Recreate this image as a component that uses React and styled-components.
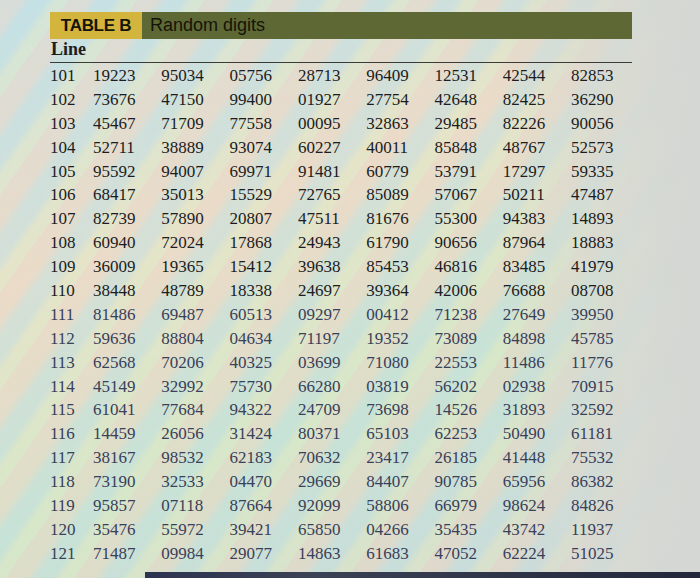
import React from 'react';
import styled, {createGlobalStyle} from 'styled-components';

const GlobalStyle = createGlobalStyle`
html, body {
  margin: 0;
  padding: 0;
}
body {
  background: #d9ddd8;
}
`;

const rows = [
  ['101', '19223', '95034', '05756', '28713', '96409', '12531', '42544', '82853'],
  ['102', '73676', '47150', '99400', '01927', '27754', '42648', '82425', '36290'],
  ['103', '45467', '71709', '77558', '00095', '32863', '29485', '82226', '90056'],
  ['104', '52711', '38889', '93074', '60227', '40011', '85848', '48767', '52573'],
  ['105', '95592', '94007', '69971', '91481', '60779', '53791', '17297', '59335'],
  ['106', '68417', '35013', '15529', '72765', '85089', '57067', '50211', '47487'],
  ['107', '82739', '57890', '20807', '47511', '81676', '55300', '94383', '14893'],
  ['108', '60940', '72024', '17868', '24943', '61790', '90656', '87964', '18883'],
  ['109', '36009', '19365', '15412', '39638', '85453', '46816', '83485', '41979'],
  ['110', '38448', '48789', '18338', '24697', '39364', '42006', '76688', '08708'],
  ['111', '81486', '69487', '60513', '09297', '00412', '71238', '27649', '39950'],
  ['112', '59636', '88804', '04634', '71197', '19352', '73089', '84898', '45785'],
  ['113', '62568', '70206', '40325', '03699', '71080', '22553', '11486', '11776'],
  ['114', '45149', '32992', '75730', '66280', '03819', '56202', '02938', '70915'],
  ['115', '61041', '77684', '94322', '24709', '73698', '14526', '31893', '32592'],
  ['116', '14459', '26056', '31424', '80371', '65103', '62253', '50490', '61181'],
  ['117', '38167', '98532', '62183', '70632', '23417', '26185', '41448', '75532'],
  ['118', '73190', '32533', '04470', '29669', '84407', '90785', '65956', '86382'],
  ['119', '95857', '07118', '87664', '92099', '58806', '66979', '98624', '84826'],
  ['120', '35476', '55972', '39421', '65850', '04266', '35435', '43742', '11937'],
  ['121', '71487', '09984', '29077', '14863', '61683', '47052', '62224', '51025'],
];

// photographed screen: soft pastel moire fading into a grey panel on the right
const Screen = styled.div`
width: 700px;
height: 578px;
overflow: hidden;
box-sizing: border-box;
padding: 12px 0 0 50px;
display: flex;
flex-direction: column;
background:
  linear-gradient(90deg, rgba(214, 217, 212, 0) 0%, rgba(214, 217, 212, 0) 72%, rgba(214, 217, 212, 0.85) 90%, #d4d7d3 100%),
  repeating-linear-gradient(125deg, rgba(250, 195, 175, 0.22) 0px, rgba(250, 195, 175, 0.22) 16px, rgba(160, 215, 235, 0.24) 26px, rgba(160, 215, 235, 0.24) 38px, rgba(225, 235, 175, 0.22) 46px, rgba(225, 235, 175, 0.22) 56px),
  linear-gradient(160deg, #cfe4e4 0%, #e6e2cf 35%, #d4e6d0 65%, #d8dbd6 100%);
`;

const Sheet = styled.div`
width: 582px;
display: flex;
flex-direction: column;
`;

const TitleBar = styled.div`
display: flex;
height: 27px;
background: #5e6835;
font-family: "Liberation Sans", Arial, sans-serif;
color: #141408;
`;

const TitleTag = styled.div`
width: 92px;
display: flex;
align-items: center;
justify-content: center;
background: #d3b43c;
font-weight: bold;
font-size: 17px;
letter-spacing: -0.3px;
`;

const TitleText = styled.div`
display: flex;
align-items: center;
padding-left: 8px;
font-size: 18px;
`;

const LineHead = styled.div`
font-family: "Liberation Serif", "Times New Roman", serif;
font-weight: bold;
font-size: 18px;
color: #1d1d1d;
padding: 0 0 2px 1px;
border-bottom: 1.5px solid #3a3a36;
`;

const Body = styled.div`
padding-top: 1px;
display: flex;
flex-direction: column;
`;

const Row = styled.div`
display: grid;
grid-template-columns: 43px repeat(8, 68.3px);
height: 23.9px;
align-items: center;
font-family: "Liberation Serif", "Times New Roman", serif;
font-size: 17px;
color: ${p => p.$fade ? '#39405a' : '#1c1c22'};
`;

const Cell = styled.span`
white-space: nowrap;
`;

const Taskbar = styled.div`
margin-top: auto;
margin-left: 95px;
height: 6px;
background: linear-gradient(90deg, #2b3450 0%, #3b4255 30%, #22283a 100%);
`;

export default function App() {
  return (
    <>
      <GlobalStyle />
      <Screen>
        <Sheet>
          <TitleBar>
            <TitleTag>TABLE B</TitleTag>
            <TitleText>Random digits</TitleText>
          </TitleBar>
          <LineHead>Line</LineHead>
          <Body>
            {rows.map((r, i) => (
              <Row key={r[0]} $fade={i > 9}>
                {r.map((c, j) => <Cell key={j}>{c}</Cell>)}
              </Row>
            ))}
          </Body>
        </Sheet>
        <Taskbar />
      </Screen>
    </>
  );
}
